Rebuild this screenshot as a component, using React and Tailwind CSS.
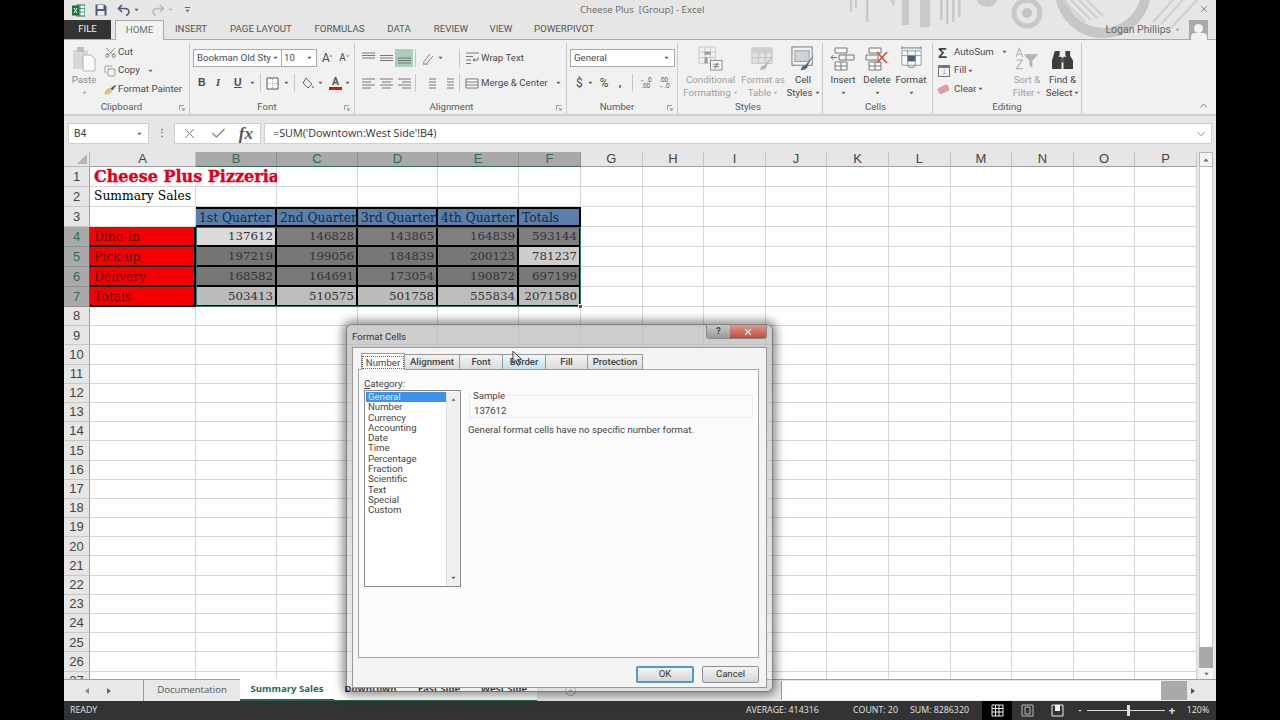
import { Scissors, Copy, Check, X, ChevronUp, ChevronDown, Plus } from "lucide-react";

const tabs = ["INSERT", "PAGE LAYOUT", "FORMULAS", "DATA", "REVIEW", "VIEW", "POWERPIVOT"];
const tabWidths = ["w-[54px]", "w-[86px]", "w-[71px]", "w-[48px]", "w-[56px]", "w-[44px]", "w-[82px]"];

const columns = ["A", "B", "C", "D", "E", "F", "G", "H", "I", "J", "K", "L", "M", "N", "O", "P"];
const selectedCols = ["B", "C", "D", "E", "F"];
const quarters = ["1st Quarter", "2nd Quarter", "3rd Quarter", "4th Quarter", "Totals"];
const groupedSheets = [
  ["Downtown", "w-[73px]"],
  ["East Side", "w-[64px]"],
  ["West Side", "w-[66px]"],
];

// label, values, background of each value
const salesRows = [
  ["Dine-In", ["137612", "146828", "143865", "164839", "593144"], ["bg-[#dadada]", "bg-[#7e7e7e]", "bg-[#7e7e7e]", "bg-[#808080]", "bg-[#7e7e7e]"]],
  ["Pick-up", ["197219", "199056", "184839", "200123", "781237"], ["bg-[#757575]", "bg-[#777777]", "bg-[#777777]", "bg-[#777777]", "bg-[#cdcdcd]"]],
  ["Delivery", ["168582", "164691", "173054", "190872", "697199"], ["bg-[#777777]", "bg-[#787878]", "bg-[#7a7a7a]", "bg-[#777777]", "bg-[#7a7a7a]"]],
  ["Totals", ["503413", "510575", "501758", "555834", "2071580"], ["bg-[#bcbcbc]", "bg-[#bdbdbd]", "bg-[#bcbcbc]", "bg-[#bdbdbd]", "bg-[#bdbdbd]"]],
];

const categories = ["General", "Number", "Currency", "Accounting", "Date", "Time", "Percentage", "Fraction", "Scientific", "Text", "Special", "Custom"];
const dialogTabs = [
  ["Alignment", "w-[55px]", "bg-gradient-to-b from-[#f4f4f4] to-[#dcdcdc]"],
  ["Font", "w-[43px]", "bg-gradient-to-b from-[#f4f4f4] to-[#dcdcdc]"],
  ["Border", "w-[43px]", "bg-gradient-to-b from-[#eef7fd] to-[#bfe0f3]"],
  ["Fill", "w-[42px]", "bg-gradient-to-b from-[#f4f4f4] to-[#dcdcdc]"],
  ["Protection", "w-[55px]", "bg-gradient-to-b from-[#f4f4f4] to-[#dcdcdc]"],
];

const Caret = ({ className = "" }) => (
  <svg viewBox="0 0 6 4" className={`w-[5px] h-[4px] shrink-0 ${className}`}>
    <path d="M0.5 0.5h5L3 3.5z" fill="#666" />
  </svg>
);

const Launcher = () => (
  <svg viewBox="0 0 7 7" className="w-[6px] h-[6px] shrink-0">
    <path d="M0.5 6V0.5H6M3 3l3 3M6 3.5V6H3.5" fill="none" stroke="#777" strokeWidth="0.8" />
  </svg>
);

const Bar = () => <div className="w-px h-[18px] bg-[#c6c6c6] shrink-0" />;

const AlignIcon = ({ lines }) => (
  <svg viewBox="0 0 13 12" className="w-[13px] h-[12px] shrink-0">
    {lines.map(([x1, x2, y]) => (
      <line key={y} x1={x1} x2={x2} y1={y} y2={y} stroke="#777" strokeWidth="1" />
    ))}
  </svg>
);

const Group = ({ width, label, launcher, labelClass = "", children }) => (
  <div className={`${width} shrink-0 flex flex-col border-r border-[#c9c9c9] mt-[3px]`}>
    <div className="flex-1 min-h-0">{children}</div>
    <div className="h-[13px] shrink-0 flex items-center pr-[4px]">
      <div className={`flex-1 text-center text-[#5a5a5a] ${labelClass}`}>{label}</div>
      {launcher && <Launcher />}
    </div>
  </div>
);

const BigButton = ({ width, icon, top, bottom, dim }) => (
  <div className={`${width} flex flex-col items-center ${dim ? "text-[#a0a0a0]" : "text-[#444]"}`}>
    <div className="h-[27px] flex items-end">{icon}</div>
    <div className="mt-[2px] leading-[13px] whitespace-nowrap">{top}</div>
    <div className="leading-[13px] h-[13px] whitespace-nowrap flex items-center gap-[2px]">
      {bottom}
      <Caret className={dim ? "opacity-40" : ""} />
    </div>
  </div>
);

const CondIcon = () => (
  <svg viewBox="0 0 26 26" className="w-[25px] h-[25px]">
    <path d="M1 1h17v17H1zM1 6h17M1 12h17M7 1v17M13 1v17" fill="none" stroke="#c8c8c8" />
    <path d="M7 6h6v3H7zM7 12h3v6H7z" fill="#9b9b9b" />
    <rect x="13" y="15" width="12" height="10" fill="#f4f4f4" stroke="#8a8a8a" />
    <path d="M16 19h6M16 21.5h6M20.5 17.5l-3 6" stroke="#777" fill="none" />
  </svg>
);

const TableIcon = () => (
  <svg viewBox="0 0 26 26" className="w-[25px] h-[25px]">
    <path d="M1 2h21v16H1zM1 7h21M1 12h21M8 2v16M15 2v16" fill="#e2e2e2" stroke="#c2c2c2" />
    <path d="M1 2h21v5H1z" fill="#cfcfcf" />
    <path d="M24 8L14 20l-3 1-2 4c3 0 6-1 7-3l1-3z" fill="#b4b4b4" />
  </svg>
);

const StylesIcon = () => (
  <svg viewBox="0 0 26 26" className="w-[25px] h-[25px]">
    <rect x="1" y="1" width="21" height="19" fill="#f6f6f6" stroke="#777" />
    <rect x="4" y="5" width="15" height="11" fill="#cfd3da" stroke="#999" />
    <path d="M24 9L15 20l-3 1-2 4c3 0 6-1 7-3l1-3z" fill="#4a6a72" />
  </svg>
);

const CellsIcon = ({ del }) => (
  <svg viewBox="0 0 26 24" className="w-[26px] h-[24px]">
    <path d="M5 1h12v5H5zM5 15h12v8H5zM11 15v8M5 19h12" fill="#fafafa" stroke="#777" />
    <path d="M2 8h12v5H2z" fill="none" stroke="#777" opacity={del ? 1 : 0} />
    {del ? (
      <path d="M13 5l10 11M23 5L13 16" stroke="#d04b3c" strokeWidth="1.6" />
    ) : (
      <path d="M1 10.5h6M3.5 8L1 10.5 3.5 13M9 8h15v5H9zM16 8v5" stroke="#777" fill="none" />
    )}
  </svg>
);

const FormatIcon = () => (
  <svg viewBox="0 0 26 26" className="w-[25px] h-[25px]">
    <path d="M3 5h20v15H3zM3 10h20M9 5v15M17 5v15" fill="#fafafa" stroke="#999" />
    <rect x="9" y="10" width="8" height="6" fill="#46607a" />
    <path d="M3 2h20M3 0.5v3M23 0.5v3M9 20c0 3 8 3 8 0" stroke="#777" fill="none" />
  </svg>
);

const SortIcon = () => (
  <svg viewBox="0 0 26 24" className="w-[25px] h-[24px]">
    <path d="M1 10L4.500 1 8 10M2.300 7h4.400M1.500 13h6L1.500 22h6.500" fill="none" stroke="#b0b0b0" strokeWidth="1.100" />
    <path d="M9 7h15l-6 7v7l-3-2v-5z" fill="#b4b4b4" />
  </svg>
);

const FindIcon = () => (
  <svg viewBox="0 0 24 22" className="w-[23px] h-[21px]">
    <path d="M4 1h5v5h-1v1h3v13H1v-9zM15 1h5v5l3 5v9H13V7h3V6h-1z" fill="#3d3d3d" />
    <rect x="10" y="8" width="4" height="5" fill="#555" />
  </svg>
);

// faint artwork Office draws behind the title bar and tab row
const TitleDecor = () => (
  <svg viewBox="0 0 370 40" className="w-[370px] h-[40px]">
    <g fill="#c9c9c9">
      <rect x="20" y="0" width="2" height="12" />
      <rect x="25" y="0" width="2" height="8" />
      <rect x="36" y="0" width="2.5" height="22" />
      <path d="M60 0h5l-1 7z" />
      <rect x="72" y="0" width="7" height="25" />
      <rect x="90" y="0" width="10" height="27" />
      <rect x="110" y="0" width="2.5" height="20" />
      <rect x="116" y="0" width="2.5" height="24" />
      <rect x="122" y="0" width="2.5" height="22" />
      <rect x="128" y="0" width="2.5" height="17" />
      <path d="M147 0h20c-2 9-18 9-20 0z" />
    </g>
    <circle cx="197" cy="13" r="13" fill="none" stroke="#c8c8c8" strokeWidth="5" />
    <circle cx="197" cy="13" r="5" fill="#c4c4c4" />
    <circle cx="273" cy="-10" r="43" fill="none" stroke="#c6c6c6" strokeWidth="10" />
    <g stroke="#d2d2d2" strokeWidth="2.5">
      <path d="M233 0l22 22M241 0l20 20M249 0l18 18M257 0l16 16" />
      <path d="M323 22L343 0M331 24L353 0M341 28L367 0" />
    </g>
  </svg>
);

const HeaderCell = ({ active, children }) => (
  <div
    className={`flex items-center justify-center text-[13px] font-['Liberation_Sans',sans-serif] border-r border-b ${
      active ? "bg-[#a9a9a9] text-[#2f6b55] border-[#8f8f8f] border-b-[#2f6b55]" : "bg-[#e6e6e6] text-[#444] border-[#c4c4c4] border-b-[#9f9f9f]"
    }`}
  >
    {children}
  </div>
);

const RowHead = ({ active, children }) => (
  <div
    className={`flex items-center justify-center text-[13px] font-['Liberation_Sans',sans-serif] border-r border-b ${
      active ? "bg-[#a9a9a9] text-[#2f6b55] border-[#909090] border-r-[#2f6b55]" : "bg-[#e6e6e6] text-[#444] border-[#c8c8c8] border-r-[#9f9f9f]"
    }`}
  >
    {children}
  </div>
);

const Blank = () => <div className="border-r border-b border-[#d6d6d6] bg-white" />;

const Blanks = ({ count }) => Array.from({ length: count }, (_, i) => <Blank key={i} />);

const Sheet = () => {
  const emptyRows = Array.from({ length: 20 }, (_, i) => i + 8);
  return (
    <div className="relative flex-1 min-w-0 overflow-hidden bg-white">
      <div className="grid grid-cols-[26px_106px_81px_81px_80px_81px_62px_repeat(10,61.6px)] grid-rows-[15px_repeat(7,20px)_repeat(20,19.2px)] font-['DejaVu_Serif',serif] text-[12.3px] text-black">
        <div className="bg-[#e6e6e6] border-r border-b border-[#b5b5b5] flex items-end justify-end p-[2px]">
          <div className="w-0 h-0 border-l-[10px] border-l-transparent border-b-[10px] border-b-[#b5b5b5]" />
        </div>
        {columns.map((c) => (
          <HeaderCell key={c} active={selectedCols.includes(c)}>{c}</HeaderCell>
        ))}

        <RowHead>1</RowHead>
        <div className="col-span-2 flex items-center pl-[4px] border-r border-b border-[#d6d6d6] whitespace-nowrap text-[#e0001b] font-bold text-[16px] [-webkit-text-stroke:0.4px_#e0001b]">
          Cheese Plus Pizzeria
        </div>
        <Blanks count={14} />

        <RowHead>2</RowHead>
        <div className="flex items-center pl-[4px] border-r border-b border-[#d6d6d6] whitespace-nowrap">Summary Sales</div>
        <Blanks count={15} />

        <RowHead>3</RowHead>
        <Blank />
        {quarters.map((q) => (
          <div key={q} className="flex items-center pl-[3px] pt-[2px] bg-[#5a7fab] text-[#16283f] border-r-2 border-b-2 border-t-2 border-black whitespace-nowrap overflow-hidden">
            {q}
          </div>
        ))}
        <Blanks count={10} />

        {salesRows.map(([label, values, shades], r) => (
          <div key={label} className="contents">
            <RowHead active>{r + 4}</RowHead>
            <div className="flex items-center pl-[4px] pt-[2px] bg-[#f40000] text-[#6f1010] border-r-2 border-b-2 border-black">{label}</div>
            {values.map((v, i) => (
              <div key={v} className={`flex items-center justify-end pr-[2px] pt-[2px] text-[11.8px] border-r-2 border-b-2 border-black whitespace-nowrap text-[#333] ${shades[i]}`}>
                {v}
              </div>
            ))}
            <Blanks count={10} />
          </div>
        ))}

        {emptyRows.map((n) => (
          <div key={n} className="contents">
            <RowHead>{n}</RowHead>
            <Blanks count={16} />
          </div>
        ))}
      </div>
      {/* selection outline over B4:F7 */}
      <div className="absolute left-[132px] top-[75px] w-[385px] h-[80px] border border-[#2f7a5c] pointer-events-none" />
      <div className="absolute left-[514px] top-[152px] w-[5px] h-[5px] bg-[#2f6b55] border border-white pointer-events-none" />
    </div>
  );
};

const VScroll = () => (
  <div className="w-[17px] shrink-0 bg-[#e6e6e6] pl-[2px] pr-px flex flex-col">
    <div className="h-[15px] bg-[#f3f3f3] border border-[#b5b5b5] flex items-center justify-center">
      <svg viewBox="0 0 6 4" className="w-[6px] h-[4px]"><path d="M0.5 3.5h5L3 0.5z" fill="#666" /></svg>
    </div>
    <div className="flex-1 bg-white border-x border-[#c9c9c9]" />
    <div className="h-[21px] bg-[#a9a9a9]" />
    <div className="h-[11px] bg-[#f3f3f3] flex items-center justify-center">
      <Caret />
    </div>
  </div>
);

const CursorArrow = () => (
  <svg viewBox="0 0 12 18" className="absolute z-20 left-[448px] top-[350px] w-[11px] h-[17px]">
    <path d="M1 1v13l3-3 2.5 5.5 2-1L6 10h4.500z" fill="#f4f4f4" fillOpacity="0.6" stroke="#222" strokeWidth="0.9" />
  </svg>
);

const FormatCells = () => (
  <div className="absolute left-[282px] top-[324px] w-[427px] h-[368px] rounded-[6px] bg-gradient-to-b from-[#b8b8b8]/70 from-[10%] to-[#c8c8c8]/30 border border-[#5a5a5a]/70 shadow-[0_0_9px_4px_rgba(30,30,30,0.45)] flex flex-col px-[5px] pb-[3px] text-[9.6px] text-[#333]">
    <div className="h-[22px] shrink-0 flex items-start">
      <span className="flex-1 pt-[5px] text-[#333]">Format Cells</span>
      <div className="flex h-[14px] rounded-b-[3px] overflow-hidden border border-t-0 border-[#888]">
        <div className="w-[23px] bg-gradient-to-b from-[#c8c8c8] to-[#999] flex items-center justify-center text-[9px] font-bold text-[#444]">?</div>
        <div className="w-[36px] bg-gradient-to-b from-[#d99a90] to-[#c0493a] flex items-center justify-center">
          <X size={10} strokeWidth={3} className="text-[#eee]" />
        </div>
      </div>
    </div>
    <div className="flex-1 min-h-0 bg-[#f4f4f4] border border-[#9a9a9a] flex flex-col">
      <div className="flex-1 min-h-0 flex flex-col px-[5px] pt-[6px]">
        <div className="flex h-[16px] items-stretch pl-[3px] relative z-10 -mb-px">
          <div className="w-[44px] bg-white border border-b-0 border-[#a0a0a0] flex items-center justify-center -mt-px text-[#444]">
            <span className="border border-dotted border-[#666] px-[3px] leading-[11px]">Number</span>
          </div>
          {dialogTabs.map(([name, width, bg]) => (
            <div key={name} className={`${width} ${bg} border border-l-0 border-[#9a9a9a] flex items-center justify-center font-medium text-[#444]`}>
              {name}
            </div>
          ))}
        </div>
        <div className="h-[289px] shrink-0 mr-[2px] bg-[#fbfbfb] border border-[#a5a5a5] flex px-[5px] pt-[7px] pb-[70px] gap-[7px]">
          <div className="w-[97px] shrink-0 flex flex-col">
            <div className="h-[14px] leading-[14px] text-[#444]"><u>C</u>ategory:</div>
            <div className="flex-1 -mt-px bg-white border border-[#8a8a8a] flex pt-px pl-px">
              <div className="flex-1 min-w-0 flex flex-col leading-[10.3px] text-[#444]">
                {categories.map((c, i) => (
                  <div key={c} className={i === 0 ? "bg-[#3d92ea] text-[#dcecfb] pl-[2px] h-[10.3px]" : "pl-[2px] h-[10.3px]"}>{c}</div>
                ))}
              </div>
              <div className="w-[14px] bg-[#f0f0f0] border-l border-[#e0e0e0] flex flex-col items-center justify-between py-[6px]">
                <svg viewBox="0 0 6 4" className="w-[5px] h-[3px]"><path d="M0.5 3.5h5L3 0.5z" fill="#555" /></svg>
                <Caret />
              </div>
            </div>
          </div>
          <div className="flex-1 min-w-0 flex flex-col">
            <div className="relative ml-px mt-[18px] h-[23px] border border-[#ececec]">
              <span className="absolute -top-[7px] left-[2px] px-px bg-[#fbfbfb] text-[#444]">Sample</span>
              <div className="pt-[8px] pl-[4px] text-[#444]">137612</div>
            </div>
            <div className="mt-[5px] text-[#444] whitespace-nowrap">General format cells have no specific number format.</div>
          </div>
        </div>
      </div>
      <div className="h-[30px] shrink-0 flex items-start justify-end gap-[8px] pr-[7px] pt-[9px]">
        <div className="w-[58px] h-[17px] rounded-[2px] border-2 border-[#4f9cc6] bg-gradient-to-b from-[#f4f4f4] to-[#d6d6d6] flex items-center justify-center">OK</div>
        <div className="w-[57px] h-[17px] rounded-[2px] border border-[#8f8f8f] bg-gradient-to-b from-[#f4f4f4] to-[#d6d6d6] flex items-center justify-center">Cancel</div>
      </div>
    </div>
  </div>
);

export default function App() {
  return (
    <div className="w-[1280px] h-[720px] bg-black flex justify-center overflow-hidden font-['Roboto',sans-serif] text-[9.7px] text-[#444]">
      <div className="relative w-[1152px] h-[720px] flex flex-col bg-[#e6e6e6]">
        {/* title decoration spans title bar and tab row */}
        <div className="absolute right-[16px] top-0 h-[40px] pointer-events-none"><TitleDecor /></div>

        {/* title bar */}
        <div className="relative h-[20px] shrink-0 flex items-center">
          <div className="flex items-center pl-[8px] relative">
            <svg viewBox="0 0 13 13" className="w-[13px] h-[13px]">
              <rect x="5" y="1" width="8" height="11" fill="#fff" stroke="#1e7145" />
              <path d="M8 1v11M5 4.5h8M5 8h8" stroke="#1e7145" strokeWidth="0.7" />
              <rect x="0" y="1.5" width="7.5" height="10" fill="#1e7145" />
              <path d="M2 4l3 5M5 4L2 9" stroke="#fff" strokeWidth="1" />
            </svg>
            <svg viewBox="0 0 12 12" className="w-[12px] h-[12px] ml-[10px]">
              <path d="M0.5 0.5h9l2 2v9h-11z" fill="#4d5a80" />
              <rect x="2.5" y="1" width="6" height="4" fill="#eee" />
              <rect x="2.5" y="7" width="7" height="4.5" fill="#eee" />
            </svg>
            <svg viewBox="0 0 14 12" className="w-[14px] h-[12px] ml-[10px]">
              <path d="M5 1L1.5 4.5 5 8M2 4.5h6c5 0 5 6 1 7" fill="none" stroke="#4d5a80" strokeWidth="1.6" />
            </svg>
            <Caret className="ml-[3px]" />
            <svg viewBox="0 0 14 12" className="w-[14px] h-[12px] ml-[12px]">
              <path d="M9 1l3.5 3.5L9 8M12 4.5H6c-5 0-5 6-1 7" fill="none" stroke="#b8b8b8" strokeWidth="1.6" />
            </svg>
            <Caret className="ml-[3px] opacity-30" />
            <div className="ml-[12px] flex flex-col items-center gap-px">
              <div className="w-[5px] h-px bg-[#666]" />
              <Caret />
            </div>
          </div>
          <div className="absolute left-[516px] w-[120px] text-center whitespace-nowrap text-[#666] font-['Open_Sans',sans-serif] text-[9.6px]">Cheese Plus&nbsp; [Group] - Excel</div>
          <X size={10} className="absolute right-[7px] top-[4px] text-[#777]" />
        </div>

        {/* tabs */}
        <div className="relative h-[20px] shrink-0 flex items-stretch border-b border-[#ababab] text-[#555]">
          <div className="w-[47px] bg-[#333] text-[#eee] flex items-center justify-center">FILE</div>
          <div className="ml-[4px] w-[49px] bg-[#f1f1f1] border border-b-0 border-[#ababab] flex items-center justify-center text-[#5b7a6b] -mb-px">HOME</div>
          {tabs.map((t, i) => (
            <div key={t} className={`${tabWidths[i]} flex items-center justify-center whitespace-nowrap`}>{t}</div>
          ))}
          <div className="ml-auto flex items-center gap-[4px] pr-[8px] relative">
            <span className="text-[#666] text-[10.5px]">Logan Phillips</span>
            <Caret className="opacity-50 mr-[5px]" />
            <div className="w-[19px] h-[20px] bg-[#aaa] flex items-end justify-center overflow-hidden">
              <div className="flex flex-col items-center">
                <div className="w-[9px] h-[9px] rounded-full bg-[#f2f2f2]" />
                <div className="w-[16px] h-[7px] rounded-t-[4px] bg-[#f2f2f2]" />
              </div>
            </div>
          </div>
        </div>

        {/* ribbon */}
        <div className="h-[76px] shrink-0 flex bg-[#f1f1f1] border-b-2 border-[#cfcfcf]">
          <Group width="w-[126px]" label="Clipboard" launcher>
            <div className="flex h-full">
              <div className="w-[40px] flex flex-col items-center pt-[3px] text-[#8c8c8c]">
                <svg viewBox="0 0 24 26" className="w-[24px] h-[26px]">
                  <rect x="1" y="4" width="15" height="19" fill="#d8d8d8" />
                  <rect x="5" y="1" width="7" height="5" fill="#bcbcbc" />
                  <path d="M11 9h8l4 4v12H11z" fill="#fafafa" stroke="#b5b5b5" />
                </svg>
                <span className="leading-[13px] mt-px">Paste</span>
                <Caret className="mt-[5px] opacity-50" />
              </div>
              <div className="flex flex-col text-[#4a4a4a]">
                <div className="h-[18.5px] shrink-0 flex items-center gap-px"><Scissors size={13} strokeWidth={1.2} className="text-[#555] -scale-x-100 rotate-90" />Cut</div>
                <div className="h-[18.5px] shrink-0 flex items-center gap-[2px]"><Copy size={12} strokeWidth={1.2} className="text-[#666]" />Copy<Caret className="ml-[6px]" /></div>
                <div className="h-[18.5px] shrink-0 flex items-center gap-px whitespace-nowrap">
                  <svg viewBox="0 0 14 12" className="w-[13px] h-[11px]"><path d="M1 11c0-3 3-6 5-6l2 3c-1 2-4 3-7 3z" fill="#e9c46a" stroke="#a98c3c" strokeWidth="0.5" /><path d="M7 5l5-4 1 1-4 5z" fill="#555" /></svg>
                  Format Painter
                </div>
              </div>
            </div>
          </Group>

          <Group width="w-[165px]" label="Font" launcher>
            <div className="flex flex-col pl-[3px] pt-[6px] text-[#4a4a4a]">
              <div className="flex items-center h-[18px]">
                <div className="w-[89px] h-[18px] bg-white border border-[#ababab] flex items-center justify-between px-[3px] whitespace-nowrap overflow-hidden">Bookman Old Sty<Caret /></div>
                <div className="w-[35px] h-[18px] bg-white border border-l-0 border-[#ababab] flex items-center justify-between px-[2px] pr-[4px]">10<Caret /></div>
                <span className="ml-[5px] text-[12px] leading-none">A<sup className="text-[6px]">^</sup></span>
                <span className="ml-[7px] text-[10px] leading-none">A<sup className="text-[6px]">˅</sup></span>
              </div>
              <div className="flex items-center h-[18px] mt-[7px] pl-[5px] text-[10.5px]">
                <span className="w-[18px] font-bold font-['Liberation_Sans',sans-serif]">B</span>
                <span className="w-[18px] italic font-bold font-['Liberation_Serif',serif]">I</span>
                <span className="w-[16px] underline font-bold font-['Liberation_Sans',sans-serif]">U</span>
                <Caret className="mr-[5px]" />
                <Bar />
                <svg viewBox="0 0 13 13" className="w-[13px] h-[13px] ml-[5px]"><path d="M1 1h11v11H1z" fill="#fff" stroke="#555" /><path d="M6.5 2v9M2 6.5h9" stroke="#aaa" strokeDasharray="1 1" /></svg>
                <Caret className="ml-[5px] mr-[5px]" />
                <Bar />
                <svg viewBox="0 0 13 13" className="w-[13px] h-[13px] ml-[6px]"><path d="M5 1l6 6-4 4-5-5z" fill="#f6f6f6" stroke="#666" /><path d="M12 8l1 3h-2z" fill="#888" /></svg>
                <Caret className="ml-[4px]" />
                <div className="ml-[6px] flex flex-col items-center w-[13px]">
                  <span className="leading-[10px] font-bold text-[#555]">A</span>
                  <div className="w-[13px] h-[3px] bg-[#e01010]" />
                </div>
                <Caret className="ml-[3px]" />
              </div>
            </div>
          </Group>

          <Group width="w-[212px]" label="Alignment" launcher labelClass="pr-[8px]">
            <div className="flex flex-col pl-[4px] pt-[6px] text-[#4a4a4a]">
              <div className="flex items-center h-[18px]">
                <div className="w-[18px] flex justify-center"><AlignIcon lines={[[0, 13, 1], [0, 13, 3.5], [0, 13, 6]]} /></div>
                <div className="w-[18px] flex justify-center"><AlignIcon lines={[[0, 13, 3.5], [0, 13, 6], [0, 13, 8.5]]} /></div>
                <div className="w-[18px] h-[18px] bg-[#a9cfb8] flex items-center justify-center"><AlignIcon lines={[[0, 13, 6], [0, 13, 8.5], [0, 13, 11]]} /></div>
                <div className="w-[2px]" />
                <Bar />
                <svg viewBox="0 0 14 13" className="w-[14px] h-[13px] ml-[5px]"><path d="M2 11L9 2M6 11L12 4" stroke="#888" /><path d="M2 12h5" stroke="#6a5acd" /></svg>
                <Caret className="ml-[3px]" />
                <div className="w-[16px]" />
                <Bar />
                <svg viewBox="0 0 15 13" className="w-[15px] h-[13px] ml-[5px]"><path d="M1 1h13M1 4.5h7M1 8h5M1 11.5h5" stroke="#777" /><path d="M8 8h5v-3M8 8l2-1.5M8 8l2 1.5" stroke="#668" fill="none" /></svg>
                <span className="ml-px">Wrap Text</span>
              </div>
              <div className="flex items-center h-[18px] mt-[7px]">
                <div className="w-[18px] flex justify-center"><AlignIcon lines={[[0, 13, 2], [0, 9, 5], [0, 13, 8], [0, 9, 11]]} /></div>
                <div className="w-[18px] flex justify-center"><AlignIcon lines={[[0, 13, 2], [2, 11, 5], [0, 13, 8], [2, 11, 11]]} /></div>
                <div className="w-[18px] flex justify-center"><AlignIcon lines={[[0, 13, 2], [4, 13, 5], [0, 13, 8], [4, 13, 11]]} /></div>
                <div className="w-[2px]" />
                <Bar />
                <div className="w-[18px] ml-[4px] flex justify-center"><AlignIcon lines={[[6, 13, 2], [6, 13, 5], [6, 13, 8], [6, 13, 11]]} /></div>
                <div className="w-[18px] flex justify-center"><AlignIcon lines={[[6, 13, 2], [6, 13, 5], [6, 13, 8], [6, 13, 11]]} /></div>
                <div className="w-[3px]" />
                <Bar />
                <svg viewBox="0 0 15 13" className="w-[15px] h-[13px] ml-[5px]"><path d="M1 2h12v9H1zM1 5h12M1 8h12" fill="#fafafa" stroke="#777" /></svg>
                <span className="ml-px whitespace-nowrap">Merge &amp; Center</span>
                <Caret className="ml-[8px]" />
              </div>
            </div>
          </Group>

          <Group width="w-[111px]" label="Number" launcher>
            <div className="flex flex-col pl-[3px] pt-[6px] text-[#4a4a4a]">
              <div className="w-[105px] h-[18px] bg-white border border-[#ababab] flex items-center justify-between px-[3px] pr-[5px]">General<Caret /></div>
              <div className="flex items-center h-[18px] mt-[7px] pl-[6px]">
                <span className="text-[12px]">$</span>
                <Caret className="ml-[5px]" />
                <span className="ml-[7px] text-[12px] w-[18px]">%</span>
                <span className="ml-px w-[13px] font-bold text-[11px] leading-[8px]">,</span>
                <Bar />
                <span className="ml-[4px] w-[18px] text-[6.5px] leading-[6px] text-[#555] text-center">←.0<br />.00</span>
                <span className="w-[18px] text-[6.5px] leading-[6px] text-[#555] text-center">.00<br />→.0</span>
              </div>
            </div>
          </Group>

          <Group width="w-[145px]" label="Styles">
            <div className="flex pt-px pl-[4px]">
              <BigButton width="w-[57px]" icon={<CondIcon />} top="Conditional" bottom="Formatting" dim />
              <BigButton width="w-[48px]" icon={<TableIcon />} top="Format as" bottom="Table" dim />
              <BigButton width="w-[32px]" icon={<StylesIcon />} top="Cell" bottom="Styles" />
            </div>
          </Group>

          <Group width="w-[110px]" label="Cells">
            <div className="flex pt-px pl-[3px]">
              <BigButton width="w-[34px]" icon={<CellsIcon />} top="Insert" bottom="" />
              <BigButton width="w-[34px]" icon={<CellsIcon del />} top="Delete" bottom="" />
              <BigButton width="w-[34px]" icon={<FormatIcon />} top="Format" bottom="" />
            </div>
          </Group>

          <Group width="w-[149px]" label="Editing" labelClass="pl-[4px]">
            <div className="flex h-full text-[#4a4a4a]">
              <div className="w-[76px] flex flex-col pl-[5px]">
                <div className="h-[18.5px] shrink-0 flex items-center whitespace-nowrap"><span className="w-[16px] text-[15px] font-bold text-[#444] leading-none font-['Liberation_Sans',sans-serif]">Σ</span>AutoSum<Caret className="ml-[8px]" /></div>
                <div className="h-[18.5px] shrink-0 flex items-center">
                  <div className="w-[16px]"><div className="w-[12px] h-[12px] border border-[#777] border-t-[3px] flex items-center justify-center text-[8px] leading-none text-[#2f5f9e]">↓</div></div>
                  Fill<Caret className="ml-[2px]" />
                </div>
                <div className="h-[18.5px] shrink-0 flex items-center">
                  <div className="w-[16px]"><div className="w-[11px] h-[7px] bg-[#e59aa9] rounded-[2px] -rotate-[25deg] border-b border-[#bbb]" /></div>
                  Clear<Caret className="ml-[2px]" />
                </div>
              </div>
              <div className="pt-px flex">
                <BigButton width="w-[36px]" icon={<SortIcon />} top="Sort &" bottom="Filter" dim />
                <BigButton width="w-[35px]" icon={<FindIcon />} top="Find &" bottom="Select" />
              </div>
            </div>
          </Group>

          <div className="flex-1 flex items-end justify-end pr-[7px] pb-[3px]">
            <ChevronUp size={11} strokeWidth={2} className="text-[#666]" />
          </div>
        </div>

        {/* formula bar */}
        <div className="h-[36px] shrink-0 flex items-start pt-[7px] bg-[#e6e6e6]">
          <div className="ml-[4px] w-[81px] h-[21px] bg-white border border-[#d0d0d0] flex items-center justify-between px-[5px] pr-[6px] text-[#444] text-[10.5px]">B4<Caret /></div>
          <div className="w-[25px] text-center text-[#777] font-bold leading-[20px]">⋮</div>
          <div className="w-[87px] h-[21px] bg-white border border-[#d0d0d0] flex items-center justify-between px-[6px] mr-[3px]">
            <X size={17} strokeWidth={1.3} className="text-[#777]" />
            <Check size={17} strokeWidth={2} className="text-[#8a8a8a]" />
            <span className="font-['Liberation_Serif',serif] italic font-bold text-[17px] leading-none text-[#555] pr-px">fx</span>
          </div>
          <div className="w-[948px] h-[21px] bg-white border border-[#d0d0d0] flex items-center justify-between pl-[8px] pr-[3px] text-[#333] font-['Open_Sans',sans-serif] text-[10.8px]">
            =SUM('Downtown:West Side'!B4)
            <ChevronDown size={14} strokeWidth={1.6} className="text-[#888]" />
          </div>
        </div>

        {/* sheet */}
        <div className="flex-1 min-h-0 flex overflow-hidden">
          <Sheet />
          <VScroll />
          <div className="w-[2px] shrink-0 bg-[#e6e6e6]" />
        </div>

        {/* sheet tabs */}
        <div className="h-[22px] shrink-0 flex items-stretch bg-[#e8e8e8] border-t border-[#9f9f9f] text-[#555] font-['Open_Sans',sans-serif] text-[9.6px]">
          <div className="w-[80px] flex items-center gap-[18px] pl-[21px] border-r border-[#999]">
            <span className="w-0 h-0 border-y-[3px] border-y-transparent border-r-[4px] border-r-[#888]" />
            <span className="w-0 h-0 border-y-[3px] border-y-transparent border-l-[4px] border-l-[#666]" />
          </div>
          <div className="w-[96px] flex items-center justify-center">Documentation</div>
          <div className="w-[94px] bg-white border-b-2 border-[#1f6a4f] flex items-center justify-center font-bold text-[#1f6a4f] -mt-px">Summary Sales</div>
          {groupedSheets.map(([name, width]) => (
            <div key={name} className={`${width} bg-white border-b border-[#1f6a4f] flex items-center justify-center font-bold text-black -mt-px`}>{name}</div>
          ))}
          <div className="w-[66px] flex items-center justify-center">
            <div className="w-[11px] h-[11px] rounded-full border border-[#999] flex items-center justify-center"><Plus size={7} className="text-[#888]" /></div>
          </div>
          <div className="w-[178px]" />
          <div className="w-[380px] my-px bg-white border-l border-[#999]" />
          <div className="w-[26px] my-px bg-[#a9a9a9]" />
          <div className="flex-1 flex items-center pl-[4px]">
            <span className="w-0 h-0 border-y-[3px] border-y-transparent border-l-[4px] border-l-[#555]" />
          </div>
        </div>

        {/* status bar */}
        <div className="h-[19px] shrink-0 flex items-stretch bg-[#333] text-[#e4e4e4] font-['Open_Sans',sans-serif] text-[8.8px]">
          <div className="w-[682px] flex items-center pl-[6px]">READY</div>
          <div className="w-[107px] flex items-center whitespace-nowrap">AVERAGE: 414316</div>
          <div className="w-[57px] flex items-center whitespace-nowrap">COUNT: 20</div>
          <div className="w-[72px] flex items-center whitespace-nowrap">SUM: 8286320</div>
          <div className="w-[30px] bg-black flex items-center justify-center">
            <svg viewBox="0 0 13 13" className="w-[13px] h-[13px]"><path d="M1 1h11v11H1zM1 4.5h11M1 8h11M4.5 1v11M8 1v11" fill="none" stroke="#eee" /></svg>
          </div>
          <div className="w-[30px] flex items-center justify-center">
            <svg viewBox="0 0 13 13" className="w-[13px] h-[13px]"><path d="M1 1h11v11H1zM4 3h5v7H4z" fill="none" stroke="#bbb" /></svg>
          </div>
          <div className="w-[30px] flex items-center justify-center">
            <svg viewBox="0 0 13 13" className="w-[13px] h-[13px]"><path d="M1 1h11v11H1z" fill="none" stroke="#eee" /><path d="M4 1h5v6H4z" fill="#eee" /></svg>
          </div>
          <div className="w-[8px] ml-[4px] flex items-center justify-center font-bold">-</div>
          <div className="w-[78px] flex items-center mx-[3px] relative">
            <div className="w-full h-px bg-[#ddd]" />
            <div className="absolute left-[40px] w-[3px] h-[11px] bg-[#ddd]" />
          </div>
          <div className="w-[8px] flex items-center justify-center font-bold text-[12px]">+</div>
          <div className="flex-1 flex items-center justify-center pl-[4px]">120%</div>
        </div>

        <FormatCells />
        <CursorArrow />
      </div>
    </div>
  );
}
